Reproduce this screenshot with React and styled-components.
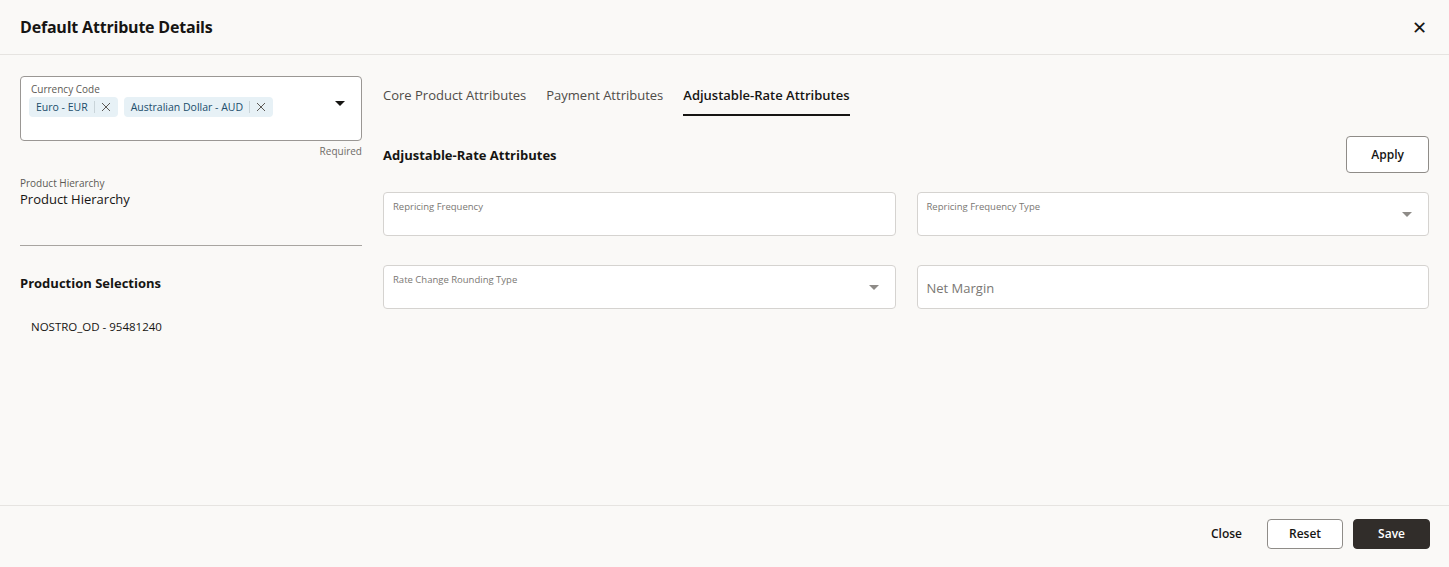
import React from "react";
import styled, { createGlobalStyle } from "styled-components";

const G = createGlobalStyle`
  html,body{margin:0;padding:0;background:#faf9f7;font-family:"Open Sans","Noto Sans",sans-serif;color:#161513;}
  *{box-sizing:border-box;}
`;
const Page = styled.div`width:1449px;height:567px;display:flex;flex-direction:column;background:#faf9f7;`;
const Header = styled.div`height:55px;border-bottom:1px solid #e6e4e1;display:flex;align-items:center;justify-content:space-between;padding:0 22px 0 20px;`;
const Title = styled.h1`margin:0;font-size:16px;font-weight:700;letter-spacing:-0.2px;`;
const Close = styled.span`font-size:18px;color:#161513;`;
const Body = styled.div`flex:1;display:flex;padding:21px 20px 0 20px;gap:21px;`;
const Left = styled.div`width:342px;display:flex;flex-direction:column;`;
const SelectBox = styled.div`position:relative;height:65px;border:1px solid #9a9794;border-radius:4px;background:#fff;padding:6px 10px;`;
const Lbl = styled.div`font-size:10px;color:#5c5955;line-height:12px;`;
const Chips = styled.div`display:flex;gap:6px;margin-top:2px;margin-left:-2px;`;
const Chip = styled.div`display:flex;align-items:center;height:20px;background:#e7f1f6;border-radius:4px;padding:0 7px;font-size:10.5px;color:#204d6b;`;
const Sep = styled.span`width:1px;height:12px;background:#c9d4d9;margin:0 6px;`;
const Caret = styled.span`position:absolute;right:16px;top:24px;width:0;height:0;border-left:5px solid transparent;border-right:5px solid transparent;border-top:5px solid #161513;`;
const Req = styled.div`text-align:right;font-size:10px;color:#6f6c68;margin-top:3px;`;
const PHLabel = styled.div`font-size:10px;color:#5c5955;margin-top:18px;`;
const PHValue = styled.div`font-size:13px;margin-top:0px;`;
const Divider = styled.div`height:1px;background:#a8a5a1;margin-top:37px;`;
const Section = styled.div`font-size:13px;font-weight:700;margin-top:28px;`;
const Item = styled.div`font-size:11.5px;margin:27px 0 0 11px;`;
const Right = styled.div`flex:1;display:flex;flex-direction:column;`;
const Tabs = styled.div`display:flex;gap:20px;height:40px;`;
const Tab = styled.div`font-size:13px;padding-top:10px;color:${p=>p.$a?"#161513":"#4f4c48"};font-weight:${p=>p.$a?600:400};border-bottom:${p=>p.$a?"2px solid #161513":"2px solid transparent"};`;
const SecRow = styled.div`display:flex;justify-content:space-between;align-items:center;margin-top:20px;`;
const SecTitle = styled.div`font-size:13px;font-weight:700;`;
const Btn = styled.button`font-family:inherit;font-size:12px;font-weight:600;height:${p=>p.$h||30}px;padding:0 ${p=>p.$px||20}px;border-radius:4px;border:1px solid ${p=>p.$dark?"#312d2a":p.$ghost?"transparent":"#8f8c88"};background:${p=>p.$dark?"#312d2a":p.$ghost?"transparent":"#fff"};color:${p=>p.$dark?"#fff":"#161513"};`;
const Grid = styled.div`display:grid;grid-template-columns:1fr 1fr;column-gap:21px;row-gap:29px;margin-top:19px;`;
const Field = styled.div`position:relative;height:44px;border:1px solid #d5d3d0;border-radius:4px;background:#fff;padding:7px 9px;`;
const FL = styled.div`font-size:9.5px;color:#7a7773;`;
const Ph = styled.div`font-size:13px;color:#7a7773;padding-top:6px;`;
const GCaret = styled(Caret)`border-top-color:#8e8b87;top:19px;right:16px;`;
const Footer = styled.div`height:62px;border-top:1px solid #e6e4e1;display:flex;justify-content:flex-end;align-items:center;gap:10px;padding:0 19px 6px 0;`;

const X = () => <svg width="10" height="10" viewBox="0 0 10 10"><path d="M1 1L9 9M9 1L1 9" stroke="#5c5955" strokeWidth="1"/></svg>;

export default function App(){
  return <Page><G/>
    <Header><Title>Default Attribute Details</Title><Close>✕</Close></Header>
    <Body>
      <Left>
        <SelectBox>
          <Lbl>Currency Code</Lbl>
          <Chips>
            <Chip>Euro - EUR<Sep/><X/></Chip>
            <Chip>Australian Dollar - AUD<Sep/><X/></Chip>
          </Chips>
          <Caret/>
        </SelectBox>
        <Req>Required</Req>
        <PHLabel>Product Hierarchy</PHLabel>
        <PHValue>Product Hierarchy</PHValue>
        <Divider/>
        <Section>Production Selections</Section>
        <Item>NOSTRO_OD - 95481240</Item>
      </Left>
      <Right>
        <Tabs>
          <Tab>Core Product Attributes</Tab>
          <Tab>Payment Attributes</Tab>
          <Tab $a>Adjustable-Rate Attributes</Tab>
        </Tabs>
        <SecRow><SecTitle>Adjustable-Rate Attributes</SecTitle><Btn $h={37} $px={24}>Apply</Btn></SecRow>
        <Grid>
          <Field><FL>Repricing Frequency</FL></Field>
          <Field><FL>Repricing Frequency Type</FL><GCaret/></Field>
          <Field><FL>Rate Change Rounding Type</FL><GCaret/></Field>
          <Field><Ph>Net Margin</Ph></Field>
        </Grid>
      </Right>
    </Body>
    <Footer>
      <Btn $ghost $px={14}>Close</Btn>
      <Btn $px={21}>Reset</Btn>
      <Btn $dark $px={24}>Save</Btn>
    </Footer>
  </Page>;
}
